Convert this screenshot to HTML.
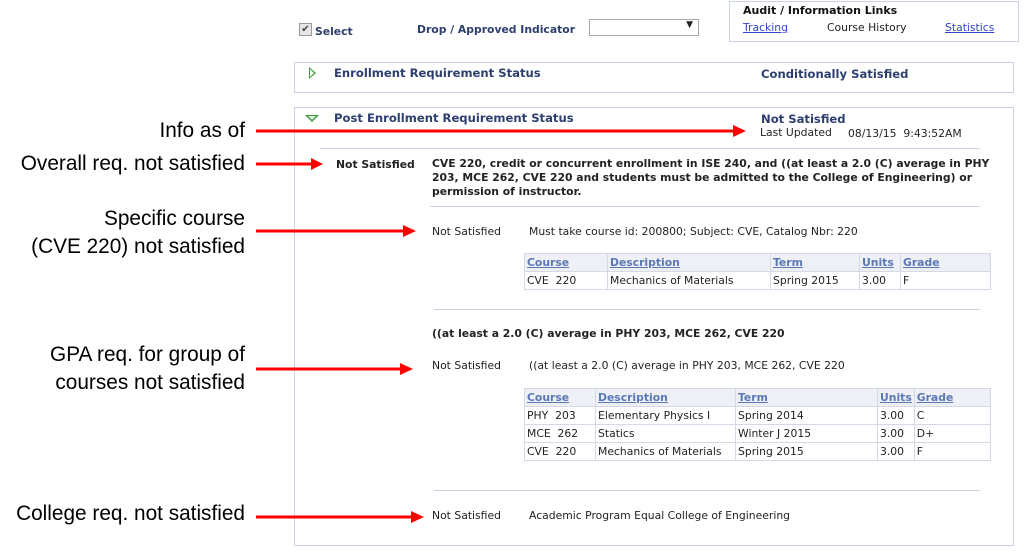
<!DOCTYPE html>
<html><head><meta charset="utf-8"><style>
body{margin:0;width:1030px;height:552px;background:#fff;position:relative;overflow:hidden;font-family:"DejaVu Sans","Liberation Sans",sans-serif;font-size:10.8px;color:#222}
.a{position:absolute;white-space:nowrap}
.lbl{position:absolute;right:785px;font-family:"Liberation Sans",Arial,sans-serif;font-size:20.8px;color:#000;text-align:right;white-space:nowrap}
.box{position:absolute;border:1px solid #c9d2e3}
.hd{color:#2c3f6e;font-weight:bold;font-size:11.6px}
.hr{position:absolute;height:1px;background:#c9d2e3}
table{position:absolute;border-collapse:collapse;font-size:10.8px}
td{border:1px solid #d3d9e6;height:17px;padding:0 2px;white-space:nowrap}
th{border:1px solid #d3d9e6;height:17px;padding:0 2px;text-align:left;background:#eef0f5;color:#5a78b5;text-decoration:underline;font-weight:bold}
a{color:#3344cc;text-decoration:underline}
</style></head><body>
<div class="a" style="left:299px;top:23px;width:11px;height:11px;border:1px solid #999;background:#e6e6e6;font-size:10px;line-height:11px;text-align:center;color:#444">✔</div>
<div class="a hd" style="left:315px;top:25px;font-size:10.8px">Select</div>
<div class="a hd" style="left:417px;top:23px;font-size:10.8px">Drop / Approved Indicator</div>
<div class="a" style="left:589px;top:19px;width:108px;height:15px;border:1px solid #aaa;"><span style="position:absolute;right:5px;top:0;font-size:9px">▼</span></div>
<div class="box" style="left:729px;top:1px;width:288px;height:39px"></div>
<div class="a" style="left:743px;top:4px;font-weight:bold;font-size:11px;color:#111">Audit / Information Links</div>
<div class="a" style="left:743px;top:21px"><a>Tracking</a></div>
<div class="a" style="left:827px;top:21px">Course History</div>
<div class="a" style="left:945px;top:21px"><a>Statistics</a></div>

<div class="box" style="left:294px;top:62px;width:718px;height:29px"></div>
<div class="a" style="left:309px;top:67px;width:0;height:0;border-left:7px solid #3a9a3a;border-top:6px solid transparent;border-bottom:6px solid transparent"></div>
<div class="a" style="left:310px;top:69px;width:0;height:0;border-left:4px solid #fff;border-top:4px solid transparent;border-bottom:4px solid transparent"></div>
<div class="a hd" style="left:334px;top:66px">Enrollment Requirement Status</div>
<div class="a hd" style="left:761px;top:67px">Conditionally Satisfied</div>

<div class="box" style="left:294px;top:107px;width:718px;height:437px"></div>
<div class="a" style="left:305px;top:115px;width:0;height:0;border-top:7px solid #3a9a3a;border-left:7px solid transparent;border-right:7px solid transparent"></div>
<div class="a" style="left:308px;top:116px;width:0;height:0;border-top:4px solid #e8f5e8;border-left:4px solid transparent;border-right:4px solid transparent"></div>
<div class="a hd" style="left:334px;top:111px">Post Enrollment Requirement Status</div>
<div class="a hd" style="left:761px;top:112px">Not Satisfied</div>
<div class="a" style="left:760px;top:126px">Last Updated</div>
<div class="a" style="left:848px;top:127px">08/13/15&nbsp; 9:43:52AM</div>
<div class="hr" style="left:320px;top:148px;width:660px"></div>
<div class="a" style="left:336px;top:158px;font-weight:bold">Not Satisfied</div>
<div class="a" style="left:432px;top:157px;font-weight:bold;line-height:14px">CVE 220, credit or concurrent enrollment in ISE 240, and ((at least a 2.0 (C) average in PHY<br>203, MCE 262, CVE 220 and students must be admitted to the College of Engineering) or<br>permission of instructor.</div>
<div class="hr" style="left:430px;top:206px;width:550px"></div>
<div class="a" style="left:432px;top:225px">Not Satisfied</div>
<div class="a" style="left:529px;top:225px">Must take course id: 200800; Subject: CVE, Catalog Nbr: 220</div>
<table style="left:524px;top:253px;width:467px"><tr><th style="width:78px">Course</th><th style="width:158px">Description</th><th style="width:84px">Term</th><th style="width:36px">Units</th><th>Grade</th></tr>
<tr><td>CVE&nbsp; 220</td><td>Mechanics of Materials</td><td>Spring 2015</td><td>3.00</td><td>F</td></tr></table>
<div class="hr" style="left:434px;top:309px;width:546px"></div>
<div class="a" style="left:432px;top:327px;font-weight:bold">((at least a 2.0 (C) average in PHY 203, MCE 262, CVE 220</div>
<div class="a" style="left:432px;top:359px">Not Satisfied</div>
<div class="a" style="left:529px;top:359px">((at least a 2.0 (C) average in PHY 203, MCE 262, CVE 220</div>
<table style="left:524px;top:388px;width:467px"><tr><th style="width:66px">Course</th><th style="width:135px">Description</th><th style="width:137px">Term</th><th style="width:31px">Units</th><th>Grade</th></tr>
<tr><td>PHY&nbsp; 203</td><td>Elementary Physics I</td><td>Spring 2014</td><td>3.00</td><td>C</td></tr>
<tr><td>MCE&nbsp; 262</td><td>Statics</td><td>Winter J 2015</td><td>3.00</td><td>D+</td></tr>
<tr><td>CVE&nbsp; 220</td><td>Mechanics of Materials</td><td>Spring 2015</td><td>3.00</td><td>F</td></tr></table>
<div class="hr" style="left:434px;top:490px;width:546px"></div>
<div class="a" style="left:432px;top:509px">Not Satisfied</div>
<div class="a" style="left:529px;top:509px">Academic Program Equal College of Engineering</div>

<div class="lbl" style="top:119px">Info as of</div>
<div class="lbl" style="top:152px">Overall req. not satisfied</div>
<div class="lbl" style="top:207px">Specific course</div>
<div class="lbl" style="top:235px">(CVE 220) not satisfied</div>
<div class="lbl" style="top:343px">GPA req. for group of</div>
<div class="lbl" style="top:371px">courses not satisfied</div>
<div class="lbl" style="top:502px">College req. not satisfied</div>

<svg class="a" style="left:0;top:0" width="1030" height="552">
<g fill="#f00">
<rect x="256" y="129.5" width="478" height="3"/><polygon points="733,125 746,131 733,137"/>
<rect x="256" y="162.5" width="58" height="3"/><polygon points="311,158 323,164 311,170"/>
<rect x="256" y="229.5" width="148" height="3"/><polygon points="403,225 416,231 403,237"/>
<rect x="256" y="367.5" width="145" height="3"/><polygon points="400,363 413,369 400,375"/>
<rect x="256" y="515.5" width="156" height="3"/><polygon points="411,511 424,517 411,523"/>
</g></svg>
</body></html>
